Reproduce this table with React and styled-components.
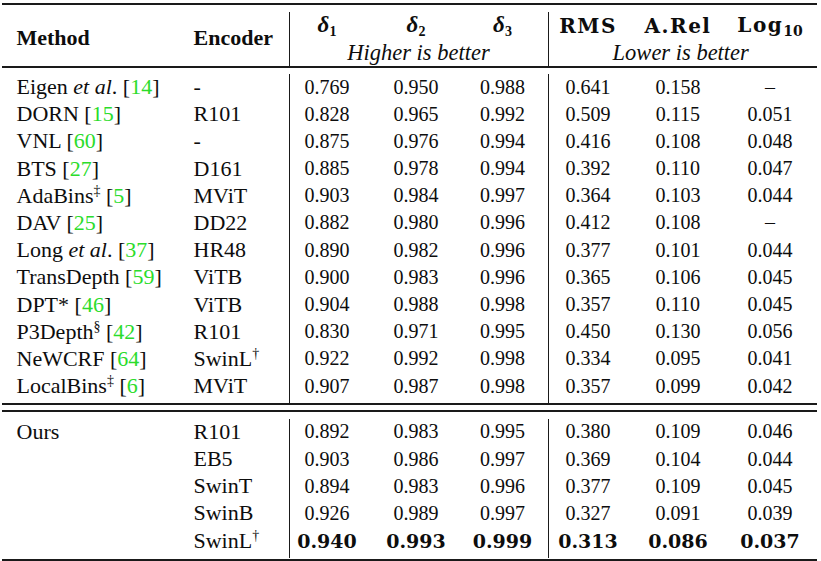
import React from 'react';
import styled, { createGlobalStyle } from 'styled-components';

const GlobalStyle = createGlobalStyle`
    html, body {
        margin: 0;
        padding: 0;
        background: #fff;
    }
    body {
        font-family: "Liberation Serif", "Times New Roman", serif;
        color: #0d0d0d;
    }
`;

const COLS = '178px 108.5px 76px 103px 80px 80px 101px 88.5px';

// per-column cell settings: alignment, padding, vertical separator
const colSpec = [
    { left: true, pl: 14.5 },
    { left: true, pl: 13.5 },
    { sep: true },
    {},
    { pr: 10 },
    { sep: true },
    {},
    { pr: 5.5 },
];

const Table = styled.div`
    width: 815px;
    margin: 3px 0 0 2px;
`;

const Rule = styled.div`
    height: 2px;
    background: #1a1a1a;
`;

const DoubleRule = styled.div`
    height: 5px;
    border-top: 2px solid #1a1a1a;
    border-bottom: 2px solid #1a1a1a;
`;

const Head = styled.div`
    display: grid;
    grid-template-columns: ${COLS};
    grid-template-rows: 27px 27px;
    padding-top: 7px;
`;

const Section = styled.div`
    padding-top: ${(p) => p.$top}px;
    padding-bottom: ${(p) => p.$bottom}px;
`;

const Row = styled.div`
    display: grid;
    grid-template-columns: ${COLS};
    height: 27.2px;
`;

const Cell = styled.div`
    display: flex;
    align-items: center;
    justify-content: ${(p) => (p.$left ? 'flex-start' : 'center')};
    padding-left: ${(p) => p.$pl || 0}px;
    padding-right: ${(p) => p.$pr || 0}px;
    padding-bottom: ${(p) => p.$lift || 0}px;
    border-left: ${(p) => (p.$sep ? '1px solid #1a1a1a' : 'none')};
    font-size: 22px;
    white-space: nowrap;
    grid-row: ${(p) => p.$row || 'auto'};
    grid-column: ${(p) => p.$col || 'auto'};
`;

const HeadText = styled.span`
    font-weight: bold;
    font-size: 22px;
`;

const MathBold = styled.span`
    font-family: "DejaVu Serif", serif;
    font-weight: bold;
    font-size: 20px;
    letter-spacing: 1.5px;
`;

const Delta = styled.span`
    font-weight: bold;
    font-style: italic;
    font-size: 23px;
`;

const Sub = styled.sub`
    font-style: normal;
    font-weight: bold;
    font-size: 14px;
    vertical-align: -4px;
    letter-spacing: 0;
`;

const Note = styled.span`
    font-style: italic;
    font-size: 22.5px;
    padding-right: ${(p) => p.$shift || 0}px;
`;

const Cite = styled.span`
    color: #2bdc2b;
`;

const Sup = styled.sup`
    font-size: 14px;
    vertical-align: 8px;
    line-height: 0;
`;

const Num = styled.span`
    font-size: 20px;
`;

const BoldNum = styled.span`
    font-family: "DejaVu Serif", serif;
    font-weight: bold;
    font-size: 19px;
`;

const Ref = ({ n }) => (
    <>
        [<Cite>{n}</Cite>]
    </>
);

const prior = [
    { m: <>Eigen <i>et al</i>. <Ref n={14} /></>, e: '-', v: ['0.769', '0.950', '0.988', '0.641', '0.158', '–'] },
    { m: <>DORN <Ref n={15} /></>, e: 'R101', v: ['0.828', '0.965', '0.992', '0.509', '0.115', '0.051'] },
    { m: <>VNL <Ref n={60} /></>, e: '-', v: ['0.875', '0.976', '0.994', '0.416', '0.108', '0.048'] },
    { m: <>BTS <Ref n={27} /></>, e: 'D161', v: ['0.885', '0.978', '0.994', '0.392', '0.110', '0.047'] },
    { m: <>AdaBins<Sup>‡</Sup> <Ref n={5} /></>, e: 'MViT', v: ['0.903', '0.984', '0.997', '0.364', '0.103', '0.044'] },
    { m: <>DAV <Ref n={25} /></>, e: 'DD22', v: ['0.882', '0.980', '0.996', '0.412', '0.108', '–'] },
    { m: <>Long <i>et al</i>. <Ref n={37} /></>, e: 'HR48', v: ['0.890', '0.982', '0.996', '0.377', '0.101', '0.044'] },
    { m: <>TransDepth <Ref n={59} /></>, e: 'ViTB', v: ['0.900', '0.983', '0.996', '0.365', '0.106', '0.045'] },
    { m: <>DPT* <Ref n={46} /></>, e: 'ViTB', v: ['0.904', '0.988', '0.998', '0.357', '0.110', '0.045'] },
    { m: <>P3Depth<Sup>§</Sup> <Ref n={42} /></>, e: 'R101', v: ['0.830', '0.971', '0.995', '0.450', '0.130', '0.056'] },
    { m: <>NeWCRF <Ref n={64} /></>, e: <>SwinL<Sup>†</Sup></>, v: ['0.922', '0.992', '0.998', '0.334', '0.095', '0.041'] },
    { m: <>LocalBins<Sup>‡</Sup> <Ref n={6} /></>, e: 'MViT', v: ['0.907', '0.987', '0.998', '0.357', '0.099', '0.042'] },
];

const ours = [
    { m: 'Ours', e: 'R101', v: ['0.892', '0.983', '0.995', '0.380', '0.109', '0.046'] },
    { m: '', e: 'EB5', v: ['0.903', '0.986', '0.997', '0.369', '0.104', '0.044'] },
    { m: '', e: 'SwinT', v: ['0.894', '0.983', '0.996', '0.377', '0.109', '0.045'] },
    { m: '', e: 'SwinB', v: ['0.926', '0.989', '0.997', '0.327', '0.091', '0.039'] },
    { m: '', e: <>SwinL<Sup>†</Sup></>, v: ['0.940', '0.993', '0.999', '0.313', '0.086', '0.037'], best: true },
];

function DataRow({ row }) {
    const cells = [row.m, row.e, ...row.v];
    return (
        <Row>
            {cells.map((c, i) => {
                const s = colSpec[i];
                let content = <span>{c}</span>;
                if (i >= 2) content = row.best ? <BoldNum>{c}</BoldNum> : <Num>{c}</Num>;
                return (
                    <Cell key={i} $left={s.left} $pl={s.pl} $pr={s.pr} $sep={s.sep} $lift={4}>
                        {content}
                    </Cell>
                );
            })}
        </Row>
    );
}

export default function App() {
    return (
        <>
            <GlobalStyle />
            <Table>
                <Rule />
                <Head>
                    <Cell $left $pl={14.5} $lift={3} $row="1 / span 2" $col="1">
                        <HeadText>Method</HeadText>
                    </Cell>
                    <Cell $left $pl={13.5} $lift={3} $row="1 / span 2" $col="2">
                        <HeadText>Encoder</HeadText>
                    </Cell>
                    <Cell $sep $row="1" $col="3">
                        <Delta>δ<Sub>1</Sub></Delta>
                    </Cell>
                    <Cell $row="1" $col="4">
                        <Delta>δ<Sub>2</Sub></Delta>
                    </Cell>
                    <Cell $pr={10} $row="1" $col="5">
                        <Delta>δ<Sub>3</Sub></Delta>
                    </Cell>
                    <Cell $sep $row="1" $col="6">
                        <MathBold>RMS</MathBold>
                    </Cell>
                    <Cell $row="1" $col="7">
                        <MathBold>A.Rel</MathBold>
                    </Cell>
                    <Cell $pr={5.5} $row="1" $col="8">
                        <MathBold>Log<Sub>10</Sub></MathBold>
                    </Cell>
                    <Cell $sep $row="2" $col="3 / span 3">
                        <Note>Higher is better</Note>
                    </Cell>
                    <Cell $sep $row="2" $col="6 / span 3">
                        <Note $shift={4}>Lower is better</Note>
                    </Cell>
                </Head>
                <Rule />
                <Section $top={6} $bottom={2.6}>
                    {prior.map((r, i) => (
                        <DataRow key={i} row={r} />
                    ))}
                </Section>
                <DoubleRule />
                <Section $top={7} $bottom={4}>
                    {ours.map((r, i) => (
                        <DataRow key={i} row={r} />
                    ))}
                </Section>
                <Rule />
            </Table>
        </>
    );
}
